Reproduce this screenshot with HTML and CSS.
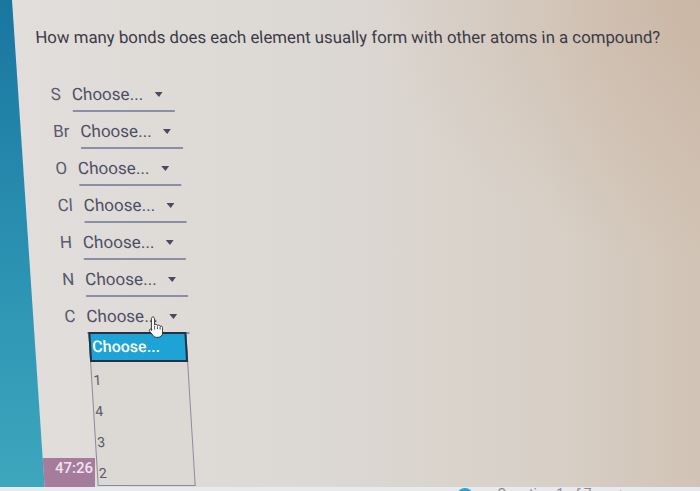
FILE: index.html
```html
<!DOCTYPE html>
<html lang="en">
<head>
<meta charset="utf-8">
<title>Quiz question</title>
<link rel="stylesheet" href="styles.css">
</head>
<body>
  <main class="page">
    <div class="sheet">
      <p class="question">How many bonds does each element usually form with other atoms in a compound?</p>
      <div class="rows">
        <div class="row"><span class="label">S</span><span class="select"><span class="value">Choose...</span><svg class="caret" viewBox="0 0 8 5"><path d="M0 0h8L4 5z"/></svg></span></div>
        <div class="row"><span class="label">Br</span><span class="select"><span class="value">Choose...</span><svg class="caret" viewBox="0 0 8 5"><path d="M0 0h8L4 5z"/></svg></span></div>
        <div class="row"><span class="label">O</span><span class="select"><span class="value">Choose...</span><svg class="caret" viewBox="0 0 8 5"><path d="M0 0h8L4 5z"/></svg></span></div>
        <div class="row"><span class="label">Cl</span><span class="select"><span class="value">Choose...</span><svg class="caret" viewBox="0 0 8 5"><path d="M0 0h8L4 5z"/></svg></span></div>
        <div class="row"><span class="label">H</span><span class="select"><span class="value">Choose...</span><svg class="caret" viewBox="0 0 8 5"><path d="M0 0h8L4 5z"/></svg></span></div>
        <div class="row"><span class="label">N</span><span class="select"><span class="value">Choose...</span><svg class="caret" viewBox="0 0 8 5"><path d="M0 0h8L4 5z"/></svg></span></div>
        <div class="row"><span class="label">C</span><span class="select open"><span class="value">Choose...</span><svg class="caret" viewBox="0 0 8 5"><path d="M0 0h8L4 5z"/></svg>
          <div class="menu">
            <div class="menu-head">Choose...</div>
            <div class="menu-list">
              <div class="opt">1</div>
              <div class="opt">4</div>
              <div class="opt">3</div>
              <div class="opt">2</div>
            </div>
          </div>
        </span></div>
      </div>
    </div>
    <div class="timer">47:26</div>
    <svg class="cursor" viewBox="0 0 16 22">
      <path class="hand" d="M6 1c.9 0 1.6.7 1.6 1.6V9c.3-.4.8-.6 1.3-.6.8 0 1.4.5 1.5 1.2.3-.3.7-.5 1.2-.5.8 0 1.4.6 1.5 1.3.3-.2.6-.3 1-.3.9 0 1.5.7 1.5 1.5V17c0 2.5-1.9 4.3-4.3 4.3H9.5c-1.5 0-2.6-.6-3.4-1.8L2.6 15.3c-.5-.7-.3-1.6.3-2 .6-.4 1.4-.3 1.9.3L4.4 14.5V2.6C4.4 1.7 5.1 1 6 1z"/>
      <path class="knuckles" d="M7.6 10v3.5M10.4 10.3v3M13.1 11v2.6"/>
    </svg>
  </main>
  <footer class="bottombar">
    <span class="dot"></span>
    <span class="qcount">Question 1 of 7</span>
    <span class="up">^</span>
  </footer>
</body>
</html>
```
FILE: styles.css
```css
html, body {
  margin: 0;
  padding: 0;
}

body {
  width: 700px;
  height: 491px;
  overflow: hidden;
  display: flex;
  flex-direction: column;
  background: linear-gradient(to bottom, #1a76a0 0%, #2a90b1 50%, #3ea7bd 100%);
  font-family: Roboto, "Noto Sans", "Liberation Sans", sans-serif;
}

.page {
  position: relative;
  flex: none;
  height: 487px;
  overflow: hidden;
  clip-path: polygon(12px 0, 100% 0, 100% 100%, 44.6px 100%);
  background:
    radial-gradient(ellipse 320px 260px at 100% 0%, rgba(196, 170, 148, 0.5), rgba(196, 170, 148, 0)),
    linear-gradient(to right, #e1dedb 0%, #dcd8d4 45%, #d8d0c7 78%, #d1c3b5 100%);
}

.sheet {
  transform: skewX(3.5deg);
  transform-origin: 0 0;
  padding: 27px 0 0 33px;
}

.question {
  margin: 0;
  font-size: 16.8px;
  line-height: 20px;
  color: #3b3b46;
  white-space: nowrap;
}

.rows {
  margin-top: 37px;
  padding-left: 12px;
  display: flex;
  flex-direction: column;
  gap: 9px;
}

.row {
  display: flex;
  align-items: flex-start;
  gap: 11px;
  font-size: 17px;
  line-height: 20px;
}

.label {
  color: #5a5a6e;
}

.select {
  position: relative;
  display: flex;
  align-items: center;
  width: 102px;
  padding-bottom: 6px;
  border-bottom: 2px solid #8c8ea6;
  color: #4e4e66;
}

.caret {
  margin-left: 12px;
  width: 8px;
  height: 5px;
  fill: #4a4a62;
}

.menu {
  position: absolute;
  top: 26px;
  left: 1px;
  width: 98px;
  height: 154px;
  box-sizing: border-box;
  border: 1px solid #888c9e;
  background: #dcd8d3;
  z-index: 2;
}

.menu-head {
  border: 2px solid #28303f;
  background: #1da3d6;
  color: #ffffff;
  font-size: 16px;
  font-weight: 500;
  line-height: 20px;
  padding: 3px 1px;
  margin: -1px -1px 0 -1px;
}

.menu-list {
  padding-top: 3px;
}

.opt {
  font-size: 14px;
  line-height: 31px;
  color: #58586a;
  padding-left: 1px;
}

.timer {
  position: absolute;
  left: 43px;
  top: 458px;
  width: 52px;
  height: 30px;
  box-sizing: border-box;
  padding-right: 2px;
  background: #a67c9d;
  color: #efe4ee;
  font-size: 15px;
  font-weight: 500;
  line-height: 20px;
  text-align: right;
}

.cursor {
  position: absolute;
  left: 147px;
  top: 316px;
  width: 16px;
  height: 22px;
  z-index: 3;
}

.hand {
  fill: #ffffff;
  stroke: #222228;
  stroke-width: 0.9;
  stroke-linejoin: round;
}

.knuckles {
  fill: none;
  stroke: #222228;
  stroke-width: 0.8;
}

.bottombar {
  flex: none;
  height: 4px;
  overflow: hidden;
  display: flex;
  align-items: flex-start;
  padding-left: 457px;
  background: #e7ebee;
  font-size: 14px;
  line-height: 16px;
  color: #8a8f99;
}

.dot {
  width: 16px;
  height: 16px;
  margin-top: 1px;
  border-radius: 50%;
  background: #2a9fd0;
}

.qcount {
  margin-left: 24px;
  margin-top: -1px;
}

.up {
  margin-left: 26px;
  margin-top: 1px;
  color: #5a8fb8;
}
```
